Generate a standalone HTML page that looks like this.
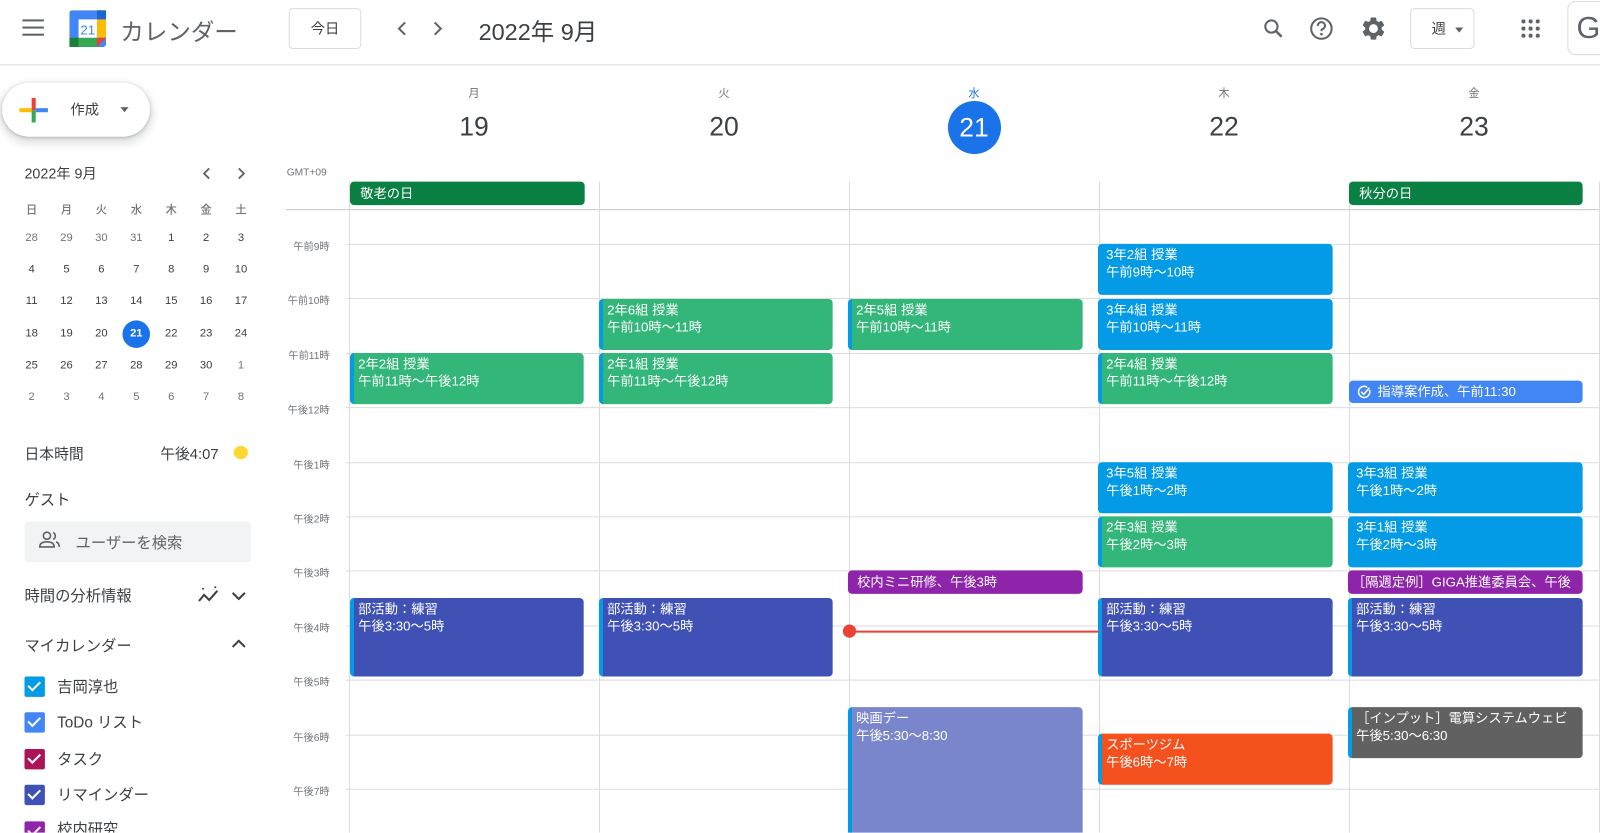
<!DOCTYPE html>
<html><head><meta charset="utf-8">
<style>
*{box-sizing:border-box;margin:0;padding:0}
body{width:1600px;height:832px;overflow:hidden;background:#fff;font-family:"Liberation Sans","Noto Sans CJK JP",sans-serif;color:#3c4043;position:relative}
#w{position:absolute;left:0;top:0;width:1568px;height:816px;transform:scale(1.0204);transform-origin:0 0;overflow:hidden}
.a{position:absolute}
.hl{position:absolute;left:339px;right:0;height:1px;background:#dadce0}
.vl{position:absolute;top:178px;bottom:0;width:1px;background:#dadce0}
.tl{position:absolute;left:262px;width:61px;text-align:right;font-size:10px;color:#70757a}
.ev{position:absolute;border-radius:4px;color:#fff;font-size:13px;line-height:17px;padding:2px 4px;border-left:4px solid #039be5;overflow:hidden;white-space:nowrap}
.g{background:#33b679}.b{background:#039be5}.ind{background:#3f51b5}.p{background:#8e24aa}
.dl{position:absolute;width:245px;text-align:center;font-size:11px;color:#70757a}
.dn{position:absolute;width:245px;text-align:center;font-size:26px;color:#3c4043}
.mc{position:absolute;width:34px;text-align:center;font-size:11px;color:#3c4043;font-weight:500}
.mc.o{color:#70757a}
.cb{position:absolute;left:24px;width:20px;height:20px;border-radius:2px}
.cb:after{content:"";position:absolute;left:6px;top:2px;width:5px;height:10px;border:solid #fff;border-width:0 2.5px 2.5px 0;transform:rotate(45deg)}
.cl{position:absolute;left:56px;font-size:15px;color:#3c4043}
</style></head><body><div id="w">
<div class="a" style="left:0;top:63px;width:1600px;height:1px;background:#dadce0"></div>
<svg class="a" style="left:21px;top:17px" width="24" height="20" viewBox="0 0 24 20"><rect x="1" y="2" width="21" height="2" fill="#5f6368"/><rect x="1" y="9" width="21" height="2" fill="#5f6368"/><rect x="1" y="16" width="21" height="2" fill="#5f6368"/></svg>
<svg class="a" style="left:68px;top:10px" width="36" height="36" viewBox="0 0 36 36">
<rect x="0" y="0" width="36" height="36" rx="3" fill="#4285f4"/>
<rect x="27" y="0" width="9" height="27" fill="#fbbc04"/>
<rect x="0" y="27" width="27" height="9" fill="#34a853"/>
<polygon points="27,27 36,27 27,36" fill="#ea4335"/>
<rect x="27" y="0" width="9" height="9" fill="#1967d2"/>
<rect x="0" y="27" width="9" height="9" fill="#188038"/>
<rect x="9" y="9" width="18" height="18" fill="#fff"/>
<text x="18" y="24" text-anchor="middle" font-size="13" fill="#4285f4" font-family="Liberation Sans">21</text></svg>
<div class="a" style="left:118px;top:12px;font-size:23px;color:#5f6368">カレンダー</div>
<div class="a" style="left:283px;top:8px;width:71px;height:40px;border:1px solid #dadce0;border-radius:4px;font-size:14px;text-align:center;line-height:38px">今日</div>
<svg class="a" style="left:385px;top:18px" width="56" height="20" viewBox="0 0 56 20"><path d="M12 4 L6 10 L12 16" stroke="#5f6368" stroke-width="2" fill="none"/><path d="M41 4 L47 10 L41 16" stroke="#5f6368" stroke-width="2" fill="none"/></svg>
<div class="a" style="left:469px;top:12px;font-size:23px;color:#3c4043">2022年 9月</div>
<svg class="a" style="left:1236px;top:16px" width="24" height="24" viewBox="0 0 24 24"><circle cx="10" cy="10" r="6" stroke="#5f6368" stroke-width="2" fill="none"/><path d="M14.5 14.5 L20 20" stroke="#5f6368" stroke-width="2.4"/></svg>
<svg class="a" style="left:1282px;top:15px" width="26" height="26" viewBox="0 0 26 26"><circle cx="13" cy="13" r="10" stroke="#5f6368" stroke-width="2" fill="none"/><path d="M9.5 10.5 A3.5 3.5 0 1 1 14 13.5 Q13 14 13 15.5" stroke="#5f6368" stroke-width="2" fill="none"/><circle cx="13" cy="18.5" r="1.3" fill="#5f6368"/></svg>
<svg class="a" style="left:1333px;top:15px" width="26" height="26" viewBox="0 0 24 24"><path fill="#5f6368" d="M19.4 13c.04-.33.06-.66.06-1s-.02-.67-.06-1l2.1-1.650c.2-.15.24-.42.12-.64l-2-3.46c-.12-.22-.39-.3-.61-.22l-2.490 1a7.3 7.3 0 0 0-1.69-.98l-.38-2.65A.49.49 0 0 0 14 2h-4c-.25 0-.46.18-.49.42l-.38 2.65c-.61.25-1.170.59-1.69.98l-2.49-1c-.23-.09-.49 0-.61.22l-2 3.46c-.13.22-.07.49.12.64L4.57 11c-.04.33-.07.67-.07 1s.03.67.07 1l-2.11 1.65c-.19.15-.24.42-.12.64l2 3.46c.12.22.39.3.61.22l2.49-1c.52.4 1.08.73 1.69.98l.38 2.65c.03.24.24.42.49.42h4c.25 0 .46-.18.49-.42l.38-2.65c.61-.25 1.17-.59 1.69-.98l2.49 1c.23.09.49 0 .61-.22l2-3.46c.12-.22.07-.49-.12-.64L19.4 13zM12 16a4 4 0 1 1 0-8 4 4 0 0 1 0 8z"/></svg>
<div class="a" style="left:1382px;top:8px;width:63px;height:40px;border:1px solid #dadce0;border-radius:4px;font-size:14px;line-height:38px;padding-left:20px">週<span style="position:absolute;left:43px;top:18px;border:4px solid transparent;border-top:5px solid #5f6368"></span></div>
<svg class="a" style="left:1490px;top:18px" width="20" height="20" viewBox="0 0 20 20" fill="#5f6368"><circle cx="3" cy="3" r="2"/><circle cx="10" cy="3" r="2"/><circle cx="17" cy="3" r="2"/><circle cx="3" cy="10" r="2"/><circle cx="10" cy="10" r="2"/><circle cx="17" cy="10" r="2"/><circle cx="3" cy="17" r="2"/><circle cx="10" cy="17" r="2"/><circle cx="17" cy="17" r="2"/></svg>
<div class="a" style="left:1536px;top:1px;width:80px;height:53px;border:1px solid #dadce0;border-radius:8px;font-size:30px;color:#5f6368;padding:9px 0 0 8px">G</div>

<div class="a" style="left:2px;top:81px;width:145px;height:53px;border-radius:27px;background:#fff;box-shadow:0 1px 3px rgba(60,64,67,.3),0 4px 8px 3px rgba(60,64,67,.15)"></div>
<svg class="a" style="left:19px;top:94px" width="28" height="28" viewBox="0 0 28 28"><rect x="12" y="2" width="4" height="12" fill="#ea4335"/><rect x="16" y="12" width="12" height="4" fill="#4285f4"/><rect x="12" y="14" width="4" height="12" fill="#34a853"/><rect x="0" y="12" width="12" height="4" fill="#fbbc04"/></svg>
<div class="a" style="left:69px;top:97px;font-size:14px;color:#3c4043">作成</div>
<div class="a" style="left:118px;top:105px;border:4px solid transparent;border-top:5px solid #5f6368"></div>
<div class="a" style="left:24px;top:160px;font-size:14px;color:#3c4043">2022年 9月</div>
<svg class="a" style="left:195px;top:162px" width="50" height="16" viewBox="0 0 50 16"><path d="M10 3 L5 8 L10 13" stroke="#5f6368" stroke-width="1.8" fill="none"/><path d="M39 3 L44 8 L39 13" stroke="#5f6368" stroke-width="1.8" fill="none"/></svg>
<div class="a" style="left:120px;top:314px;width:27px;height:27px;border-radius:50%;background:#1a73e8"></div>
<div id="mini"></div>
<div class="a" style="left:24px;top:434px;font-size:14.5px">日本時間</div>
<div class="a" style="left:157px;top:434px;font-size:14.5px">午後4:07</div>
<div class="a" style="left:229px;top:437px;width:14px;height:13px;border-radius:50%;background:#fdd835"></div>
<div class="a" style="left:24px;top:479px;font-size:15px">ゲスト</div>
<div class="a" style="left:24px;top:511px;width:222px;height:40px;border-radius:4px;background:#f1f3f4"></div>
<svg class="a" style="left:37px;top:520px" width="24" height="18" viewBox="0 0 24 18"><circle cx="9" cy="5" r="3.5" stroke="#5f6368" stroke-width="1.6" fill="none"/><path d="M2 16 Q2 11 9 11 Q16 11 16 16 Z" stroke="#5f6368" stroke-width="1.6" fill="none"/><path d="M15 2 A3.5 3.5 0 0 1 15 8.5 M18 11 Q21 12 21 16" stroke="#5f6368" stroke-width="1.6" fill="none"/></svg>
<div class="a" style="left:74px;top:521px;font-size:15px;color:#5f6368">ユーザーを検索</div>
<div class="a" style="left:24px;top:573px;font-size:15px">時間の分析情報</div>
<svg class="a" style="left:194px;top:574px" width="52" height="20" viewBox="0 0 52 20"><path d="M1 15 L6 9 L11 14 L19 5" stroke="#3c4043" stroke-width="2" fill="none"/><circle cx="5" cy="3" r="1" fill="#3c4043"/><circle cx="17" cy="1.5" r="1" fill="#3c4043"/><path d="M34 7 L40 13 L46 7" stroke="#3c4043" stroke-width="2" fill="none"/></svg>
<div class="a" style="left:24px;top:622px;font-size:15px">マイカレンダー</div>
<svg class="a" style="left:226px;top:624px" width="16" height="14" viewBox="0 0 16 14"><path d="M2 10 L8 4 L14 10" stroke="#3c4043" stroke-width="2" fill="none"/></svg>
<div class="cb" style="top:663px;background:#039be5"></div><div class="cl" style="top:662px">吉岡淳也</div>
<div class="cb" style="top:698px;background:#4285f4"></div><div class="cl" style="top:697px">ToDo リスト</div>
<div class="cb" style="top:734px;background:#ad1457"></div><div class="cl" style="top:733px">タスク</div>
<div class="cb" style="top:769px;background:#3f51b5"></div><div class="cl" style="top:768px">リマインダー</div>
<div class="cb" style="top:805px;background:#8e24aa"></div><div class="cl" style="top:802px">校内研究</div>

<div class="dl" style="left:342px;top:83px">月</div><div class="dn" style="left:342px;top:109px">19</div>
<div class="dl" style="left:587px;top:83px">火</div><div class="dn" style="left:587px;top:109px">20</div>
<div class="a" style="left:929px;top:99px;width:52px;height:52px;border-radius:50%;background:#1a73e8"></div>
<div class="dl" style="left:832px;top:83px;color:#1a73e8">水</div><div class="dn" style="left:832px;top:110px;color:#fff">21</div>
<div class="dl" style="left:1077px;top:83px">木</div><div class="dn" style="left:1077px;top:109px">22</div>
<div class="dl" style="left:1322px;top:83px">金</div><div class="dn" style="left:1322px;top:109px">23</div>
<div class="a" style="left:281px;top:164px;font-size:10px;color:#70757a">GMT+09</div>

<div class="a" style="left:280px;top:205px;width:1320px;height:1px;background:#c4c7c5"></div>
<div class="vl" style="left:342px"></div><div class="vl" style="left:587px"></div><div class="vl" style="left:832px"></div><div class="vl" style="left:1077px"></div><div class="vl" style="left:1322px"></div><div class="vl" style="left:1567px"></div>
<div id="grid"></div>

<div class="a" style="left:343px;top:178px;width:230px;height:23px;border-radius:4px;background:#0b8043;color:#fff;font-size:13px;line-height:23px;padding-left:10px">敬老の日</div>
<div class="a" style="left:1322px;top:178px;width:229px;height:23px;border-radius:4px;background:#0b8043;color:#fff;font-size:13px;line-height:23px;padding-left:10px">秋分の日</div>

<div class="ev b" style="left:1076px;top:239px;width:230px;height:50px">3年2組 授業<br>午前9時〜10時</div>
<div class="ev g" style="left:587px;top:293px;width:229px;height:50px">2年6組 授業<br>午前10時〜11時</div>
<div class="ev g" style="left:831px;top:293px;width:230px;height:50px">2年5組 授業<br>午前10時〜11時</div>
<div class="ev b" style="left:1076px;top:293px;width:230px;height:50px">3年4組 授業<br>午前10時〜11時</div>
<div class="ev g" style="left:343px;top:346px;width:229px;height:50px">2年2組 授業<br>午前11時〜午後12時</div>
<div class="ev g" style="left:587px;top:346px;width:229px;height:50px">2年1組 授業<br>午前11時〜午後12時</div>
<div class="ev g" style="left:1076px;top:346px;width:230px;height:50px">2年4組 授業<br>午前11時〜午後12時</div>
<div class="a" style="left:1322px;top:373px;width:229px;height:22px;border-radius:4px;background:#4285f4;color:#fff;font-size:13px;line-height:22px;padding-left:28px">指導案作成、午前11:30
<svg class="a" style="left:8px;top:4px" width="14" height="14" viewBox="0 0 14 14"><path d="M12 5 A5.5 5.5 0 1 1 10 2.5" stroke="#fff" stroke-width="1.5" fill="none"/><path d="M4 7 L6.5 9.5 L12 3" stroke="#fff" stroke-width="1.5" fill="none"/></svg></div>
<div class="ev b" style="left:1076px;top:453px;width:230px;height:50px">3年5組 授業<br>午後1時〜2時</div>
<div class="ev b" style="left:1321px;top:453px;width:230px;height:50px">3年3組 授業<br>午後1時〜2時</div>
<div class="ev g" style="left:1076px;top:506px;width:230px;height:50px">2年3組 授業<br>午後2時〜3時</div>
<div class="ev b" style="left:1321px;top:506px;width:230px;height:50px">3年1組 授業<br>午後2時〜3時</div>
<div class="a" style="left:831px;top:559px;width:230px;height:23px;border-radius:4px;background:#8e24aa;color:#fff;font-size:13px;line-height:23px;padding-left:9px">校内ミニ研修、午後3時</div>
<div class="a" style="left:1321px;top:559px;width:230px;height:23px;border-radius:4px;background:#8e24aa;color:#fff;font-size:13px;line-height:23px;padding-left:4px;white-space:nowrap;overflow:hidden">［隔週定例］GIGA推進委員会、午後</div>
<div class="ev ind" style="left:343px;top:586px;width:229px;height:77px">部活動：練習<br>午後3:30〜5時</div>
<div class="ev ind" style="left:587px;top:586px;width:229px;height:77px">部活動：練習<br>午後3:30〜5時</div>
<div class="ev ind" style="left:1076px;top:586px;width:230px;height:77px">部活動：練習<br>午後3:30〜5時</div>
<div class="ev ind" style="left:1321px;top:586px;width:230px;height:77px">部活動：練習<br>午後3:30〜5時</div>
<div class="a" style="left:832px;top:618px;width:245px;height:2px;background:#ea4335"></div>
<div class="a" style="left:826px;top:612px;width:13px;height:13px;border-radius:50%;background:#ea4335"></div>
<div class="ev" style="left:831px;top:693px;width:230px;height:150px;background:#7986cb">映画デー<br>午後5:30〜8:30</div>
<div class="ev" style="left:1076px;top:719px;width:230px;height:50px;background:#f4511e">スポーツジム<br>午後6時〜7時</div>
<div class="ev" style="left:1321px;top:693px;width:230px;height:50px;background:#616161">［インプット］電算システムウェビ<br>午後5:30〜6:30</div>
</div>
<script>
var g='';var labs=['午前9時','午前10時','午前11時','午後12時','午後1時','午後2時','午後3時','午後4時','午後5時','午後6時','午後7時'];
for(var i=0;i<11;i++){var y=239+i*53.4;g+='<div class="hl" style="top:'+y+'px"></div><div class="tl" style="top:'+(y-6)+'px">'+labs[i]+'</div>';}
document.getElementById('grid').innerHTML=g;
var m='';var hd=['日','月','火','水','木','金','土'];
for(var j=0;j<7;j++)m+='<div class="mc o" style="left:'+(14+j*34.2)+'px;top:197px">'+hd[j]+'</div>';
var d=[28,29,30,31];for(var k=1;k<=30;k++)d.push(k);for(k=1;k<=8;k++)d.push(k);
for(var n=0;n<42;n++){var r=Math.floor(n/7),c=n%7;var o=(n<4||n>33)?' o':'';var st=n==24?'color:#fff;font-weight:bold;':'';
m+='<div class="mc'+o+'" style="'+st+'left:'+(14+c*34.2)+'px;top:'+(227+r*31.2)+'px">'+d[n]+'</div>';}
document.getElementById('mini').innerHTML=m;
</script>
</body></html>
